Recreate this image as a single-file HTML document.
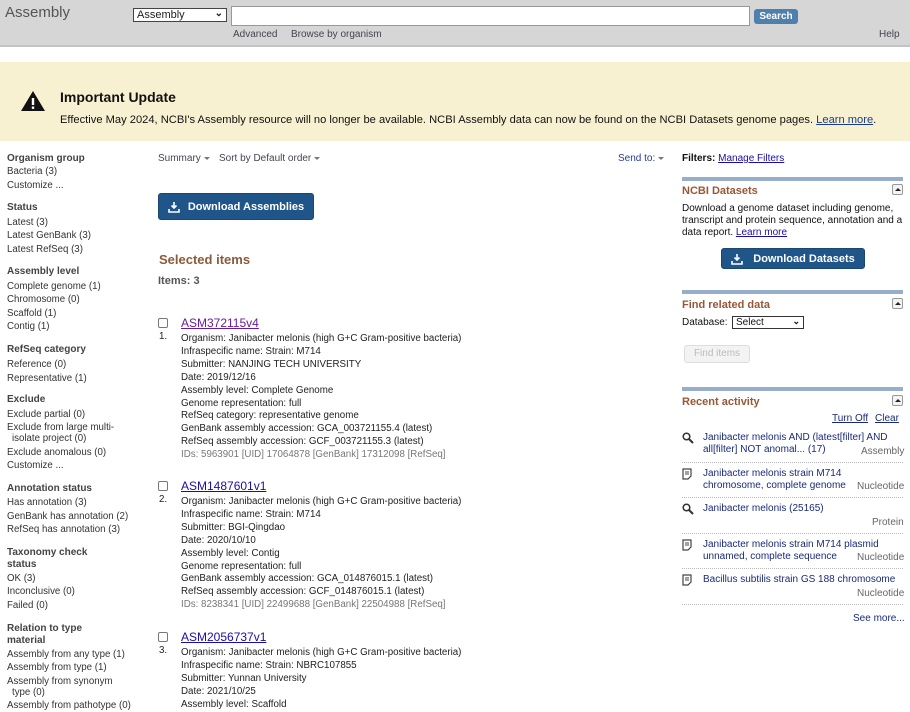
<!DOCTYPE html>
<html><head><meta charset="utf-8"><style>
*{margin:0;padding:0;box-sizing:border-box}
body{width:910px;height:703px;overflow:hidden;position:relative;font-family:"Liberation Sans",Arial,sans-serif;background:#fff;color:#222}
.a{position:absolute;white-space:nowrap}
.lh{font-size:10px;font-weight:bold;color:#444;line-height:12px}
.ll{font-size:9.7px;color:#333;line-height:12px}
.d{font-size:9.75px;color:#222;line-height:12px}
.id{color:#777}
.ttl{font-size:12px;color:#1a0dab;text-decoration:underline;line-height:14px}
.cb{position:absolute;width:10px;height:10px;border:1px solid #777;border-radius:2px;background:#fff}
.btn{position:absolute;background:#20558a;border-radius:3px;color:#fff;font-weight:bold;font-size:11px;display:flex;align-items:center;justify-content:center;border:1px solid #1b4670}
.bar{position:absolute;left:682px;width:221px;height:4px;background:#97aecb}
.ph{font-size:11px;font-weight:bold;color:#985735;line-height:13px}
.tog{position:absolute;left:892px;width:11px;height:11px;border:1px solid #999;border-radius:2px;background:#f4f4f4}
.tog:after{content:"";position:absolute;left:2px;top:3px;border-left:3px solid transparent;border-right:3px solid transparent;border-bottom:3px solid #222}
.ra{font-size:10px;color:#1a2a7a;line-height:12px}
.db{font-size:10px;color:#666;line-height:12px}
.dot{position:absolute;left:682px;width:221px;border-top:1px dotted #bbb}
.car{display:inline-block;border-left:3px solid transparent;border-right:3px solid transparent;border-top:3px solid #777;vertical-align:middle;margin-left:3px}
</style></head><body>
<div class="a" style="left:0;top:0;width:910px;height:47px;background:#d6d6d6;border-bottom:2px solid #c3c3c3"></div>
<div class="a" style="left:5px;top:4px;font-size:15px;color:#555">Assembly</div>
<div class="a" style="left:133px;top:8px;width:94px;height:14px;border:1px solid #444;background:#fff;font-size:11px;line-height:12px;padding-left:3px">Assembly<span style="position:absolute;right:3px;top:-1px;font-size:10px;font-weight:bold">⌄</span></div>
<div class="a" style="left:231px;top:6px;width:519px;height:20px;border:1px solid #999;background:#fff"></div>
<div class="a" style="left:754px;top:9px;width:44px;height:15px;background:#4f7fad;border-radius:3px;color:#fff;font-size:10px;font-weight:bold;text-align:center;line-height:15px">Search</div>
<div class="a" style="left:233px;top:29px;font-size:10px;color:#445">Advanced</div>
<div class="a" style="left:291px;top:29px;font-size:10px;color:#445">Browse by organism</div>
<div class="a" style="left:879px;top:29px;font-size:10px;color:#445">Help</div>

<div class="a" style="left:0;top:62px;width:910px;height:79px;background:#f8f1d1"></div>
<svg class="a" style="left:20px;top:90px" width="26" height="22" viewBox="0 0 26 22"><path d="M13 1L25 21H1Z" fill="#111"/><rect x="11.8" y="8" width="2.4" height="7" fill="#fff"/><rect x="11.8" y="16.5" width="2.4" height="2.4" fill="#fff"/></svg>
<div class="a" style="left:60px;top:89px;font-size:14px;font-weight:bold;color:#111">Important Update</div>
<div class="a" style="left:60px;top:114px;font-size:11.15px;color:#111">Effective May 2024, NCBI's Assembly resource will no longer be available. NCBI Assembly data can now be found on the NCBI Datasets genome pages. <span style="color:#1a3e8a;text-decoration:underline">Learn more</span>.</div>

<!-- left -->
<div class="a lh" style="left:7px;top:153px">Organism group</div>
<div class="a ll" style="left:7px;top:166px">Bacteria (3)</div>
<div class="a ll" style="left:7px;top:180px">Customize ...</div>
<div class="a lh" style="left:7px;top:202px">Status</div>
<div class="a ll" style="left:7px;top:217px">Latest (3)</div>
<div class="a ll" style="left:7px;top:230px">Latest GenBank (3)</div>
<div class="a ll" style="left:7px;top:244px">Latest RefSeq (3)</div>
<div class="a lh" style="left:7px;top:266px">Assembly level</div>
<div class="a ll" style="left:7px;top:281px">Complete genome (1)</div>
<div class="a ll" style="left:7px;top:294px">Chromosome (0)</div>
<div class="a ll" style="left:7px;top:308px">Scaffold (1)</div>
<div class="a ll" style="left:7px;top:321px">Contig (1)</div>
<div class="a lh" style="left:7px;top:344px">RefSeq category</div>
<div class="a ll" style="left:7px;top:359px">Reference (0)</div>
<div class="a ll" style="left:7px;top:373px">Representative (1)</div>
<div class="a lh" style="left:7px;top:394px">Exclude</div>
<div class="a ll" style="left:7px;top:409px">Exclude partial (0)</div>
<div class="a ll" style="left:7px;top:422px">Exclude from large multi-</div>
<div class="a ll" style="left:12px;top:433px">isolate project (0)</div>
<div class="a ll" style="left:7px;top:447px">Exclude anomalous (0)</div>
<div class="a ll" style="left:7px;top:460px">Customize ...</div>
<div class="a lh" style="left:7px;top:483px">Annotation status</div>
<div class="a ll" style="left:7px;top:497px">Has annotation (3)</div>
<div class="a ll" style="left:7px;top:511px">GenBank has annotation (2)</div>
<div class="a ll" style="left:7px;top:524px">RefSeq has annotation (3)</div>
<div class="a lh" style="left:7px;top:547px">Taxonomy check</div>
<div class="a lh" style="left:7px;top:559px">status</div>
<div class="a ll" style="left:7px;top:573px">OK (3)</div>
<div class="a ll" style="left:7px;top:586px">Inconclusive (0)</div>
<div class="a ll" style="left:7px;top:600px">Failed (0)</div>
<div class="a lh" style="left:7px;top:623px">Relation to type</div>
<div class="a lh" style="left:7px;top:635px">material</div>
<div class="a ll" style="left:7px;top:649px">Assembly from any type (1)</div>
<div class="a ll" style="left:7px;top:662px">Assembly from type (1)</div>
<div class="a ll" style="left:7px;top:676px">Assembly from synonym</div>
<div class="a ll" style="left:12px;top:687px">type (0)</div>
<div class="a ll" style="left:7px;top:700px">Assembly from pathotype (0)</div>

<!-- middle -->
<div class="a" style="left:158px;top:153px;font-size:10px;color:#445">Summary<span class="car"></span></div>
<div class="a" style="left:219px;top:153px;font-size:10px;color:#445">Sort by Default order<span class="car"></span></div>
<div class="a" style="left:618px;top:153px;font-size:10px;color:#2a3a9a">Send to:<span class="car"></span></div>
<div class="btn" style="left:158px;top:193px;width:156px;height:27px"><svg width="12" height="12" viewBox="0 0 12 12" style="margin-right:8px"><path d="M6 1V7M3.5 4.5L6 7L8.5 4.5M1 8V11H11V8" stroke="#fff" stroke-width="1.6" fill="none"/></svg>Download Assemblies</div>
<div class="a" style="left:159px;top:252px;font-size:13px;font-weight:bold;color:#8a5a3a">Selected items</div>
<div class="a" style="left:158px;top:275px;font-size:11px;font-weight:bold;color:#555">Items: 3</div>

<div class="cb" style="left:158px;top:318px"></div>
<div class="a ttl" style="left:181px;top:316px;color:#6a1b9a">ASM372115v4</div>
<div class="a d" style="left:159px;top:331px">1.</div>
<div class="a d" style="left:181px;top:333px;line-height:12.9px">Organism: Janibacter melonis (high G+C Gram-positive bacteria)<br>Infraspecific name: Strain: M714<br>Submitter: NANJING TECH UNIVERSITY<br>Date: 2019/12/16<br>Assembly level: Complete Genome<br>Genome representation: full<br>RefSeq category: representative genome<br>GenBank assembly accession: GCA_003721155.4 (latest)<br>RefSeq assembly accession: GCF_003721155.3 (latest)<br><span class="id">IDs: 5963901 [UID] 17064878 [GenBank] 17312098 [RefSeq]</span></div>

<div class="cb" style="left:158px;top:481px"></div>
<div class="a ttl" style="left:181px;top:479px">ASM1487601v1</div>
<div class="a d" style="left:159px;top:494px">2.</div>
<div class="a d" style="left:181px;top:496px;line-height:12.9px">Organism: Janibacter melonis (high G+C Gram-positive bacteria)<br>Infraspecific name: Strain: M714<br>Submitter: BGI-Qingdao<br>Date: 2020/10/10<br>Assembly level: Contig<br>Genome representation: full<br>GenBank assembly accession: GCA_014876015.1 (latest)<br>RefSeq assembly accession: GCF_014876015.1 (latest)<br><span class="id">IDs: 8238341 [UID] 22499688 [GenBank] 22504988 [RefSeq]</span></div>

<div class="cb" style="left:158px;top:632px"></div>
<div class="a ttl" style="left:181px;top:630px">ASM2056737v1</div>
<div class="a d" style="left:159px;top:645px">3.</div>
<div class="a d" style="left:181px;top:647px;line-height:12.9px">Organism: Janibacter melonis (high G+C Gram-positive bacteria)<br>Infraspecific name: Strain: NBRC107855<br>Submitter: Yunnan University<br>Date: 2021/10/25<br>Assembly level: Scaffold</div>

<!-- right -->
<div class="a" style="left:682px;top:153px;font-size:10px;font-weight:bold;color:#111">Filters: <span style="font-weight:normal;color:#1a0dab;text-decoration:underline">Manage Filters</span></div>
<div class="bar" style="top:177px"></div>
<div class="a ph" style="left:682px;top:185px">NCBI Datasets</div>
<div class="tog" style="top:184px"></div>
<div class="a" style="left:682px;top:203px;font-size:10px;line-height:12px;color:#111;white-space:normal;width:226px">Download a genome dataset including genome, transcript and protein sequence, annotation and a data report. <span style="color:#1a0dab;text-decoration:underline">Learn more</span></div>
<div class="btn" style="left:721px;top:248px;width:144px;height:21px"><svg width="12" height="12" viewBox="0 0 12 12" style="margin-right:10px"><path d="M6 1V7M3.5 4.5L6 7L8.5 4.5M1 8V11H11V8" stroke="#fff" stroke-width="1.6" fill="none"/></svg>Download Datasets</div>
<div class="bar" style="top:290px"></div>
<div class="a ph" style="left:682px;top:299px">Find related data</div>
<div class="tog" style="top:298px"></div>
<div class="a" style="left:682px;top:317px;font-size:10px;color:#111">Database:</div>
<div class="a" style="left:732px;top:316px;width:72px;height:13px;border:1px solid #333;font-size:10px;line-height:11px;padding-left:3px;color:#111">Select<span style="position:absolute;right:3px;top:-1px;font-size:9px;font-weight:bold">⌄</span></div>
<div class="a" style="left:684px;top:345px;width:66px;height:18px;border:1px solid #ddd;border-radius:3px;background:#f3f3f3;color:#bbb;font-size:10px;text-align:center;line-height:16px">Find items</div>
<div class="bar" style="top:387px"></div>
<div class="a ph" style="left:682px;top:396px">Recent activity</div>
<div class="tog" style="top:395px"></div>
<div class="a ra" style="left:832px;top:413px;text-decoration:underline">Turn Off</div>
<div class="a ra" style="left:875px;top:413px;text-decoration:underline">Clear</div>

<svg class="a" style="left:682px;top:432px" width="12" height="12" viewBox="0 0 12 12"><circle cx="4.5" cy="4.5" r="3.3" stroke="#333" stroke-width="1.5" fill="none"/><path d="M7 7L11 11" stroke="#333" stroke-width="2"/></svg>
<div class="a ra" style="left:703px;top:432px">Janibacter melonis AND (latest[filter] AND<br>all[filter] NOT anomal... (17)</div>
<div class="a db" style="left:861px;top:446px">Assembly</div>
<div class="dot" style="top:462px"></div>
<svg class="a" style="left:682px;top:468px" width="10" height="12" viewBox="0 0 10 12"><path d="M1 1H9V8L6 11H1Z" stroke="#444" stroke-width="1.2" fill="#fff"/><path d="M3 4H7M3 6H7" stroke="#444"/></svg>
<div class="a ra" style="left:703px;top:468px">Janibacter melonis strain M714<br>chromosome, complete genome</div>
<div class="a db" style="left:857px;top:481px">Nucleotide</div>
<div class="dot" style="top:497px"></div>
<svg class="a" style="left:682px;top:503px" width="12" height="12" viewBox="0 0 12 12"><circle cx="4.5" cy="4.5" r="3.3" stroke="#333" stroke-width="1.5" fill="none"/><path d="M7 7L11 11" stroke="#333" stroke-width="2"/></svg>
<div class="a ra" style="left:703px;top:503px">Janibacter melonis (25165)</div>
<div class="a db" style="left:872px;top:517px">Protein</div>
<div class="dot" style="top:533px"></div>
<svg class="a" style="left:682px;top:539px" width="10" height="12" viewBox="0 0 10 12"><path d="M1 1H9V8L6 11H1Z" stroke="#444" stroke-width="1.2" fill="#fff"/><path d="M3 4H7M3 6H7" stroke="#444"/></svg>
<div class="a ra" style="left:703px;top:539px">Janibacter melonis strain M714 plasmid<br>unnamed, complete sequence</div>
<div class="a db" style="left:857px;top:552px">Nucleotide</div>
<div class="dot" style="top:568px"></div>
<svg class="a" style="left:682px;top:574px" width="10" height="12" viewBox="0 0 10 12"><path d="M1 1H9V8L6 11H1Z" stroke="#444" stroke-width="1.2" fill="#fff"/><path d="M3 4H7M3 6H7" stroke="#444"/></svg>
<div class="a ra" style="left:703px;top:574px">Bacillus subtilis strain GS 188 chromosome</div>
<div class="a db" style="left:857px;top:588px">Nucleotide</div>
<div class="dot" style="top:604px"></div>
<div class="a ra" style="left:853px;top:613px">See more...</div>
</body></html>
